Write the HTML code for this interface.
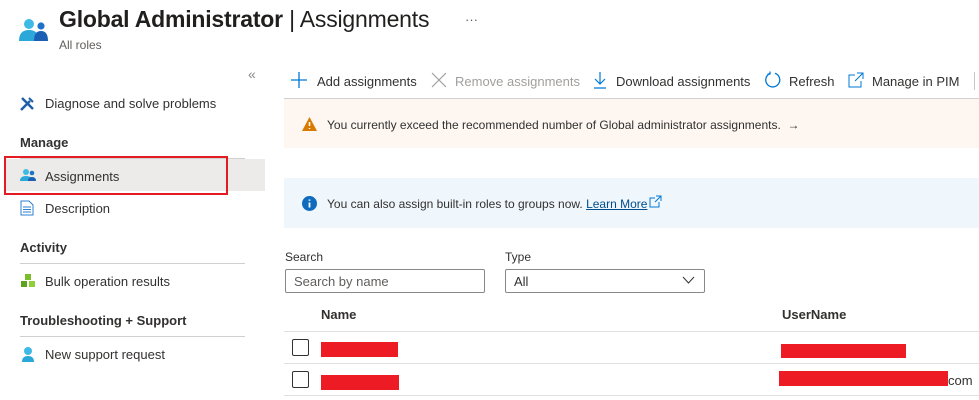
<!DOCTYPE html>
<html><head><style>
*{margin:0;padding:0;box-sizing:border-box}
body{width:979px;height:400px;overflow:hidden;background:#fff;font-family:"Liberation Sans",sans-serif;color:#323130;position:relative;font-size:13px}
.a{position:absolute;white-space:nowrap}
.hd{font-weight:bold;font-size:13px;color:#323130}
.ln{position:absolute;height:1px;background:#d2d0ce}
.red{position:absolute;background:#ed1c24}
</style></head><body>
<svg class="a" style="left:18px;top:17px" width="32" height="26" viewBox="0 0 32 26">
<circle cx="11" cy="7" r="5" fill="#3fb9e6"/><path d="M1 24 Q1 13 11 13 Q21 13 21 24Z" fill="#2aa8d9"/>
<circle cx="23" cy="9" r="3.6" fill="#1e73c8"/><path d="M16 24 Q16 14 23 14 Q30 14 30 24Z" fill="#1a5fb4"/>
</svg>
<div class="a" style="left:59px;top:6px;font-size:23px;color:#201f1e;letter-spacing:-0.2px"><span style="font-weight:bold">Global Administrator</span> | Assignments</div>
<div class="a" style="left:465px;top:12px;font-size:13px;color:#605e5c">···</div>
<div class="a" style="left:59px;top:38px;font-size:12px;color:#605e5c">All roles</div>

<div class="a" style="left:248px;top:66px;font-size:14px;color:#8a8886">«</div>
<svg class="a" style="left:19px;top:96px" width="16" height="16" viewBox="0 0 16 16"><path d="M2 14 L11 5" stroke="#1f5fa8" stroke-width="2.5"/><path d="M3 2 L14 13" stroke="#1f5fa8" stroke-width="2.5"/><path d="M10 2 L14 6" stroke="#1f5fa8" stroke-width="2"/></svg>
<div class="a" style="left:45px;top:96px">Diagnose and solve problems</div>
<div class="a hd" style="left:20px;top:135px">Manage</div>
<div class="ln" style="left:20px;top:158px;width:225px"></div>
<div class="a" style="left:5px;top:159px;width:260px;height:32px;background:#edebe9"></div>
<div class="a" style="left:4px;top:156px;width:224px;height:39px;border:2px solid #e31b23"></div>
<svg class="a" style="left:20px;top:168px" width="16" height="14" viewBox="0 0 16 14"><circle cx="6" cy="4" r="3" fill="#3fb9e6"/><path d="M0 13 Q0 8 6 8 Q12 8 12 13Z" fill="#2aa8d9"/><circle cx="12" cy="5" r="2.3" fill="#1e73c8"/><path d="M8 13 Q8 9 12 9 Q16 9 16 13Z" fill="#1a5fb4"/></svg>
<div class="a" style="left:45px;top:169px">Assignments</div>
<svg class="a" style="left:20px;top:200px" width="14" height="16" viewBox="0 0 14 16"><path d="M1 1 H9 L13 5 V15 H1Z" fill="#fff" stroke="#2f7fd1"/><path d="M3 7 H11 M3 9.5 H11 M3 12 H11" stroke="#2f7fd1"/></svg>
<div class="a" style="left:45px;top:201px">Description</div>
<div class="a hd" style="left:20px;top:240px">Activity</div>
<div class="ln" style="left:20px;top:263px;width:225px"></div>
<svg class="a" style="left:20px;top:274px" width="16" height="14" viewBox="0 0 16 14"><rect x="5" y="0" width="6" height="6" fill="#7cbd2b"/><rect x="1" y="7" width="6" height="6" fill="#5ea31c"/><rect x="9" y="7" width="6" height="6" fill="#8fcf3a"/></svg>
<div class="a" style="left:45px;top:274px">Bulk operation results</div>
<div class="a hd" style="left:20px;top:313px">Troubleshooting + Support</div>
<div class="ln" style="left:20px;top:336px;width:225px"></div>
<svg class="a" style="left:21px;top:346px" width="14" height="16" viewBox="0 0 14 16"><circle cx="7" cy="5" r="4" fill="#3fb9e6"/><path d="M1 16 Q1 10 7 10 Q13 10 13 16Z" fill="#2aa8d9"/></svg>
<div class="a" style="left:45px;top:347px">New support request</div>

<svg class="a" style="left:291px;top:72px" width="16" height="16" viewBox="0 0 16 16"><path d="M8 0 V16 M0 8 H16" stroke="#0078d4" stroke-width="1.3"/></svg>
<div class="a" style="left:317px;top:74px">Add assignments</div>
<svg class="a" style="left:431px;top:72px" width="16" height="16" viewBox="0 0 16 16"><path d="M1 1 L15 15 M15 1 L1 15" stroke="#a19f9d" stroke-width="1.2"/></svg>
<div class="a" style="left:455px;top:74px;color:#a19f9d">Remove assignments</div>
<svg class="a" style="left:593px;top:72px" width="14" height="17" viewBox="0 0 14 17"><path d="M7 0 V12 M2 7 L7 12 L12 7 M1 16 H13" stroke="#0078d4" stroke-width="1.2" fill="none"/></svg>
<div class="a" style="left:616px;top:74px">Download assignments</div>
<svg class="a" style="left:764px;top:71px" width="18" height="18" viewBox="0 0 18 18" fill="none" stroke="#0078d4" stroke-width="1.3"><path d="M11 2.3 A7 7 0 1 1 6 2.5"/><path d="M6 0.5 V3 H3.5"/></svg>
<div class="a" style="left:789px;top:74px">Refresh</div>
<svg class="a" style="left:848px;top:72px" width="16" height="16" viewBox="0 0 16 16" fill="none" stroke="#0078d4"><path d="M13 9 V15 H1 V3 H7 M9 1 H15 V7 M15 1 L7 9"/></svg>
<div class="a" style="left:872px;top:74px">Manage in PIM</div>
<div class="a" style="left:974px;top:72px;width:1px;height:18px;background:#c8c6c4"></div>
<div class="ln" style="left:284px;top:98px;width:695px"></div>
<div class="a" style="left:284px;top:99px;width:695px;height:49px;background:#fdf6f1"></div>
<svg class="a" style="left:302px;top:117px" width="15" height="14" viewBox="0 0 15 14"><path d="M7.5 0 L15 14 H0Z" fill="#d97a00"/><path d="M7.5 5 V9 M7.5 11 V12" stroke="#fff" stroke-width="1.6"/></svg>
<div class="a" style="left:327px;top:118px;font-size:12px">You currently exceed the recommended number of Global administrator assignments. &nbsp;→</div>
<div class="a" style="left:284px;top:178px;width:695px;height:50px;background:#eff6fc"></div>
<svg class="a" style="left:302px;top:196px" width="15" height="15" viewBox="0 0 15 15"><circle cx="7.5" cy="7.5" r="7.5" fill="#0f6cbd"/><path d="M7.5 6.5 V11.5 M7.5 3.5 V4.7" stroke="#fff" stroke-width="1.8"/></svg>
<div class="a" style="left:327px;top:197px;font-size:12px">You can also assign built-in roles to groups now. <span style="color:#004e8c;text-decoration:underline">Learn More</span></div>
<svg class="a" style="left:649px;top:195px" width="13" height="13" viewBox="0 0 13 13" fill="none" stroke="#0078d4"><path d="M10 7 V12 H1 V3 H6 M7 1 H12 V6 M12 1 L6 7"/></svg>

<div class="a" style="left:285px;top:250px;font-size:12px">Search</div>
<div class="a" style="left:285px;top:269px;width:200px;height:24px;border:1px solid #8a8886;border-radius:2px"></div>
<div class="a" style="left:294px;top:274px;color:#605e5c">Search by name</div>
<div class="a" style="left:505px;top:250px;font-size:12px">Type</div>
<div class="a" style="left:505px;top:269px;width:200px;height:24px;border:1px solid #8a8886;border-radius:2px"></div>
<div class="a" style="left:514px;top:274px">All</div>
<svg class="a" style="left:682px;top:276px" width="13" height="8" viewBox="0 0 13 8" fill="none" stroke="#323130"><path d="M1 1 L6.5 7 L12 1"/></svg>
<div class="a hd" style="left:321px;top:307px">Name</div>
<div class="a hd" style="left:782px;top:307px">UserName</div>
<div class="ln" style="left:284px;top:331px;width:695px;background:#e1dfdd"></div>
<div class="a" style="left:292px;top:339px;width:17px;height:17px;border:1px solid #323130;border-radius:2px"></div>
<div class="red" style="left:321px;top:342px;width:77px;height:15px"></div>
<div class="red" style="left:781px;top:344px;width:125px;height:14px"></div>
<div class="ln" style="left:284px;top:363px;width:695px;background:#e1dfdd"></div>
<div class="a" style="left:292px;top:371px;width:17px;height:17px;border:1px solid #323130;border-radius:2px"></div>
<div class="red" style="left:321px;top:375px;width:78px;height:15px"></div>
<div class="a" style="left:948px;top:373px">com</div>
<div class="red" style="left:779px;top:371px;width:169px;height:15px"></div>
<div class="ln" style="left:284px;top:395px;width:695px;background:#e1dfdd"></div>
</body></html>
